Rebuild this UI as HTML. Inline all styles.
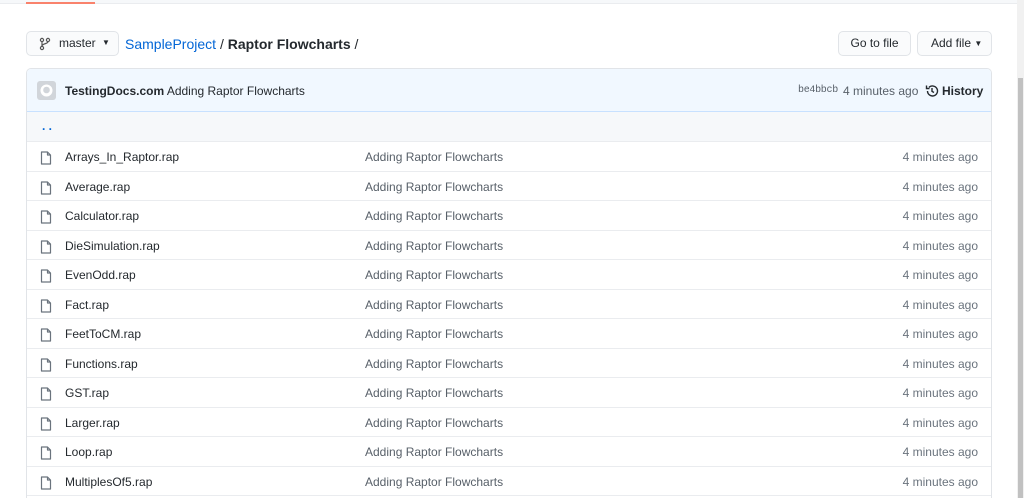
<!DOCTYPE html>
<html><head><meta charset="utf-8"><style>
*{box-sizing:border-box;margin:0;padding:0}
html,body{width:1024px;height:498px;overflow:hidden}
body{background:#fff;font-family:"Liberation Sans",sans-serif;font-size:12px;color:#24292e;position:relative}
.top{position:absolute;left:0;top:0;width:1017px;height:4px;background:#f6f8fa;border-bottom:1px solid #eaecef}
.red{position:absolute;left:26px;top:2px;width:69px;height:2px;background:#f9826c}
.sb{position:absolute;left:1017px;top:0;width:7px;height:498px;background:#f1f1f1}
.thumb{position:absolute;left:1018px;top:78px;width:5px;height:420px;background:#c1c1c1}
.btn{position:absolute;top:31px;height:25px;border:1px solid #e1e4e8;border-radius:5px;background:#fafbfc;font-size:12px;line-height:23px;color:#24292e}
.crumb{position:absolute;left:125px;top:36px;font-size:14px;font-weight:bold}
.box{position:absolute;left:26px;top:68px;width:966px;height:440px;border:1px solid #e1e4e8;border-radius:5px;overflow:hidden}
.hdr{height:43px;background:#f1f8ff;border-bottom:1px solid #c8e1ff;position:relative}
.up{height:30px;background:#f6f8fa;border-bottom:1px solid #eaecef;color:#0366d6;padding-left:15px;line-height:28px;font-weight:bold}
.row{height:29.5px;border-bottom:1px solid #eaecef;position:relative;line-height:30px}
.row svg{position:absolute;left:13px;top:9px}
.n{position:absolute;left:38px}
.m{position:absolute;left:338px;color:#586069}
.t{position:absolute;right:13px;color:#6a737d}
</style></head><body>
<div class="top"></div><div class="red"></div>
<div class="sb"></div><div class="thumb"></div>
<div class="btn" style="left:26px;width:93px;padding-left:12px">
<svg width="12" height="14" viewBox="0 0 12 14" style="position:absolute;left:12px;top:5px"><circle cx="3" cy="3" r="1.6" fill="none" stroke="#555" stroke-width="1.2"/><circle cx="3" cy="11" r="1.6" fill="none" stroke="#555" stroke-width="1.2"/><circle cx="9" cy="3" r="1.6" fill="none" stroke="#555" stroke-width="1.2"/><path d="M3 4.6V9.4M9 4.6C9 7 3 6.5 3 9" fill="none" stroke="#555" stroke-width="1.2"/></svg>
<span style="position:absolute;left:32px">master</span><span style="position:absolute;left:75px;top:-1px;font-size:8px">▼</span></div>
<div class="crumb"><span style="color:#0366d6;font-weight:normal">SampleProject</span> <span style="font-weight:normal">/</span> Raptor Flowcharts <span style="font-weight:normal">/</span></div>
<div class="btn" style="left:838px;width:73px;text-align:center">Go to file</div>
<div class="btn" style="left:917px;width:75px;padding-left:13px">Add file <span style="font-size:8px;position:relative;top:-1px">▼</span></div>
<div class="box">
<div class="hdr">
<div style="position:absolute;left:10px;top:12px;width:19px;height:19px;background:#d1d5da;border-radius:3px"><svg width="19" height="19" viewBox="0 0 19 19"><circle cx="9.5" cy="9.5" r="6" fill="#fff"/><circle cx="9.5" cy="9" r="3.3" fill="#d1d5da"/></svg></div>
<span style="position:absolute;left:38px;top:15px"><b>TestingDocs.com</b> Adding Raptor Flowcharts</span>
<span style="position:absolute;left:771px;top:16px;font-family:'Liberation Mono',monospace;font-size:10px;color:#586069;letter-spacing:-0.3px">be4bbcb</span>
<span style="position:absolute;left:816px;top:15px;color:#586069">4 minutes ago</span>
<svg width="14" height="14" viewBox="0 0 14 14" style="position:absolute;left:898px;top:15px"><path d="M2.5 7A5 5 0 1 0 4 3.4M1.5 1.5V4.5H4.5M7 4V7.3L9 8.5" fill="none" stroke="#24292e" stroke-width="1.4"/></svg>
<b style="position:absolute;left:915px;top:15px">History</b>
</div>
<div class="up">. .</div>
<div id="rows"></div>
</div>
<script>
var f=["Arrays_In_Raptor.rap","Average.rap","Calculator.rap","DieSimulation.rap","EvenOdd.rap","Fact.rap","FeetToCM.rap","Functions.rap","GST.rap","Larger.rap","Loop.rap","MultiplesOf5.rap"];
var h="";f.forEach(function(x){h+='<div class="row"><svg width="12" height="14" viewBox="0 0 12 14"><path d="M1.5 1H7.5L10.5 4V13H1.5Z M7.5 1V4H10.5" fill="none" stroke="#6a737d" stroke-width="1.2" stroke-linejoin="round"/></svg><span class="n">'+x+'</span><span class="m">Adding Raptor Flowcharts</span><span class="t">4 minutes ago</span></div>'});
document.getElementById("rows").innerHTML=h;
</script>
</body></html>
